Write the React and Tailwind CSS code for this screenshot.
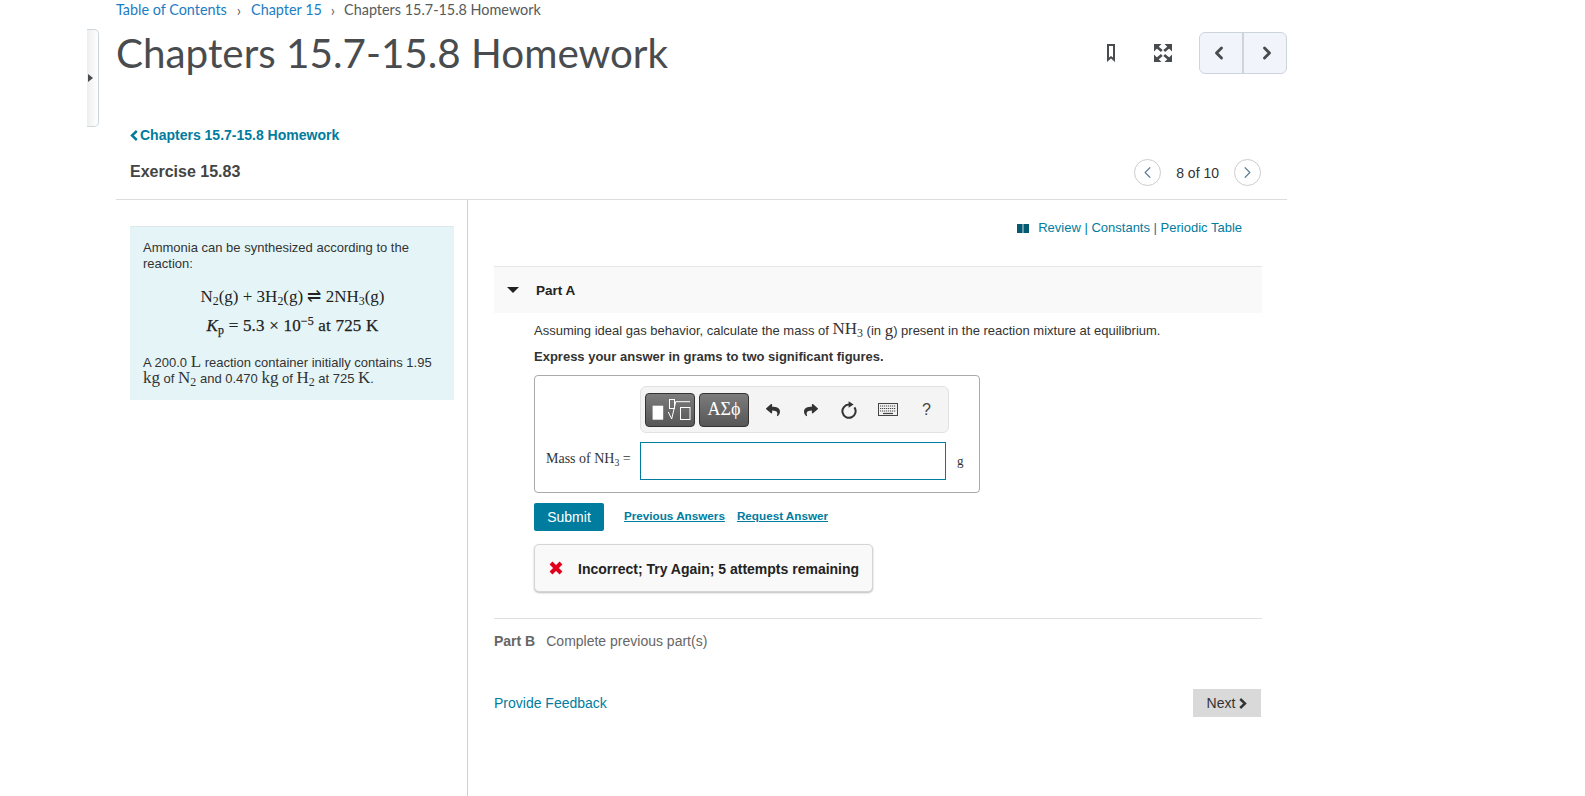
import { ChevronLeft, ChevronRight } from 'lucide-react';
import { FaReply, FaShare } from 'react-icons/fa';

const ARIAL = 'font-["Liberation_Sans",Arial,sans-serif]';
const SERIF = 'font-["Liberation_Serif",serif]';

const Sub = ({ children }) => (
  <span className="relative top-[3px] text-[0.7em] leading-none">{children}</span>
);

const Sup = ({ children }) => (
  <span className="relative -top-[6px] text-[0.7em] leading-none">{children}</span>
);

const M = ({ children }) => <span className={`${SERIF} text-[17px] leading-[0]`}>{children}</span>;

const Bookmark = () => (
  <svg width="8" height="18" viewBox="0 0 8 18" fill="#494c4e">
    <path d="M0 0h8v18l-4-3.4L0 18zM2 2v11.6l2-1.7 2 1.7V2z" fillRule="evenodd" />
  </svg>
);

const Expand = () => (
  <svg width="18" height="18" viewBox="0 0 18 18" fill="#494c4e" stroke="#494c4e">
    <path d="M0 0h7.5L0 7.5zM18 0h-7.5L18 7.5zM0 18h7.5L0 10.5zM18 18h-7.5l7.5-7.5z" strokeWidth="0" />
    <path d="M3 3l4.8 4M15 3l-4.8 4M3 15l4.8-4M15 15l-4.8-4" strokeWidth="2.8" fill="none" />
  </svg>
);

const Book = () => (
  <svg width="12" height="9" viewBox="0 0 12 9" fill="#045a71">
    <path d="M0 0h5.6v9H0zM6.4 0H12v9H6.4z" />
  </svg>
);

const BoldChevron = () => (
  <svg width="8" height="11" viewBox="0 0 8 11" fill="none" stroke="#007c9e" strokeWidth="2.4">
    <path d="M6.8 1L2 5.5l4.8 4.5" />
  </svg>
);

const KeyboardIcon = () => (
  <svg width="20" height="13" viewBox="0 0 20 13">
    <rect x="0.5" y="0.5" width="19" height="12" fill="#f2f2f2" stroke="#444" />
    <path d="M2 3h16M2 5.5h16M2 8h16" stroke="#444" strokeWidth="1.2" strokeDasharray="1.2 0.8" />
    <path d="M5 10.5h10" stroke="#444" strokeWidth="1.2" />
  </svg>
);

const Rotate = () => (
  <svg width="18" height="18" viewBox="0 0 18 18" fill="none">
    <path d="M9 3.6A6.6 6.6 0 1 0 14.4 6.4" stroke="#333" strokeWidth="2" />
    <path d="M8.6 0.2l5 3.3-5 3.3z" fill="#333" />
  </svg>
);

const TemplatesIcon = () => (
  <svg width="48" height="32" viewBox="0 0 48 32" fill="none">
    <rect x="6.6" y="11.7" width="10.6" height="14" fill="#fff" />
    <rect x="23.5" y="5.5" width="5" height="9" stroke="#fff" />
    <path d="M22.3 18l3.4 7 4-17.3H44" stroke="#fff" />
    <rect x="34.5" y="13.5" width="9.5" height="12" stroke="#fff" />
  </svg>
);

const DarkButton = ({ className = '', children }) => (
  <button className={`flex h-[34px] w-[50px] items-center justify-center rounded-[4px] border border-[#333] bg-gradient-to-b from-[#7c7c7c] to-[#575757] ${className}`}>
    {children}
  </button>
);

const CirclePager = ({ children }) => (
  <button className="flex h-[27px] w-[27px] items-center justify-center rounded-full border border-[#ccc] text-[#5f7f95]">
    {children}
  </button>
);

const App = () => {
  return (
    <div className={`relative h-[796px] overflow-hidden bg-white ${ARIAL}`}>
      {/* side panel handle */}
      <div className="absolute left-[87px] top-[29px] flex h-[98px] w-[12px] items-center rounded-r-[5px] border border-l-0 border-[#cdd5dc] bg-gradient-to-r from-[#eeeeee] to-white">
        <div className="ml-[1px] h-0 w-0 border-y-[4px] border-l-[5px] border-y-transparent border-l-[#494c4e]" />
      </div>

      <div className="ml-[116px] w-[1171px]">
        <nav className='flex h-[20px] items-center font-["Lato",sans-serif] text-[14.4px] text-[#565a5c]'>
          <a className="text-[#1c7cc4]">Table of Contents</a>
          <span className="mx-[10px] text-[15px]">›</span>
          <a className="text-[#1c7cc4]">Chapter 15</a>
          <span className="mx-[9px] text-[15px]">›</span>
          <span>Chapters 15.7-15.8 Homework</span>
        </nav>

        <header className="flex h-[67px] items-center">
          <h1 className='font-["Lato",sans-serif] text-[40.4px] leading-none text-[#494c4e]'>
            Chapters 15.7-15.8 Homework
          </h1>
          <div className="ml-auto mb-[2px] flex items-center">
            <Bookmark />
            <span className="ml-[39px]">
              <Expand />
            </span>
            <div className="ml-[27px] flex h-[42px] w-[88px] rounded-[6px] border border-[#cdd5dc] bg-[#f1f5fb] text-[#494c4e]">
              <button className="flex w-[44px] items-center justify-center border-r-2 border-[#cdd5dc] pr-[5px]">
                <ChevronLeft size={20} strokeWidth={3.5} />
              </button>
              <button className="flex flex-1 items-center justify-center pl-[3px]">
                <ChevronRight size={20} strokeWidth={3.5} />
              </button>
            </div>
          </div>
        </header>

        <div className="mt-[38px] pl-[14px]">
          <a className="flex h-[20px] items-center gap-[2px] text-[14px] font-bold text-[#007c9e]">
            <BoldChevron />
            Chapters 15.7-15.8 Homework
          </a>
        </div>

        <div className="mt-[10px] flex h-[33px] items-center pl-[14px] pr-[26px]">
          <h2 className="text-[16px] font-bold text-[#444]">Exercise 15.83</h2>
          <div className="ml-auto mt-[1px] flex items-center text-[14px] text-[#333]">
            <CirclePager>
              <ChevronLeft size={19} strokeWidth={1.5} />
            </CirclePager>
            <span className="mx-[15px] mt-[2px]">8 of 10</span>
            <CirclePager>
              <ChevronRight size={19} strokeWidth={1.5} />
            </CirclePager>
          </div>
        </div>

        <div className="mt-[11px] flex h-[597px] border-t border-[#dddddd]">
          {/* left column */}
          <aside className="w-[352px] shrink-0 border-r border-[#c7d3e0] pl-[14px] pt-[26px]">
            <div className="h-[174px] w-[324px] border-t border-[#dde8ea] bg-[#e5f5f7] px-[13px] pt-[13px] text-[13px] leading-[16px] text-[#333]">
              <p>
                Ammonia can be synthesized according to the
                <br />
                reaction:
              </p>
              <div className={`${SERIF} mt-[11px] text-center text-[17px] leading-[28px] text-[#222]`}>
                <div className="pl-[1px]">
                  N<Sub>2</Sub>(g) + 3H<Sub>2</Sub>(g) ⇌ 2NH<Sub>3</Sub>(g)
                </div>
                <div className="mt-[1px] pl-[1px] tracking-[0.2px] [-webkit-text-stroke:0.25px]">
                  <i>K</i>
                  <Sub>p</Sub> = 5.3 × 10<Sup>−5</Sup> at 725 K
                </div>
              </div>
              <p className="mt-[15px] leading-[16px]">
                A 200.0 <M>L</M> reaction container initially contains 1.95
                <br />
                <M>kg</M> of <M>N<Sub>2</Sub></M> and 0.470 <M>kg</M> of <M>H<Sub>2</Sub></M> at 725 <M>K</M>.
              </p>
            </div>
          </aside>

          {/* right column */}
          <main className="flex-1 pl-[26px] pr-[25px]">
            <div className="mt-[20px] flex h-[16px] items-center justify-end pr-[20px] text-[13px] text-[#007c9e]">
              <Book />
              <span className="ml-[9px]">Review | Constants | Periodic Table</span>
            </div>

            <section className="mt-[30px] flex h-[47px] items-center border-t border-[#e5e5e5] bg-[#f9f9f9]">
              <div className="ml-[13px] h-0 w-0 border-x-[6px] border-t-[6px] border-x-transparent border-t-[#222]" />
              <h3 className="ml-[17px] pt-[2px] text-[13.5px] font-bold text-[#222]">Part A</h3>
            </section>

            <div className="pl-[40px]">
              <p className="mt-[8px] flex h-[20px] items-center whitespace-pre text-[13px] text-[#333]">
                Assuming ideal gas behavior, calculate the mass of <M>NH<Sub>3</Sub></M> (in <M>g</M>) present in the reaction mixture at equilibrium.
              </p>
              <p className="mt-[6px] h-[20px] text-[13px] font-bold leading-[20px] text-[#333]">
                Express your answer in grams to two significant figures.
              </p>

              <div className="mt-[8px] h-[118px] w-[446px] rounded-[4px] border border-[#aaaaaa] pl-[11px] pt-[10px]">
                <div className="ml-[94px] flex h-[47px] w-[309px] items-center rounded-[6px] border border-[#e2e2e2] bg-[#f4f4f4] pl-[4px]">
                  <DarkButton>
                    <TemplatesIcon />
                  </DarkButton>
                  <DarkButton className={`ml-[4px] ${SERIF} text-[18px] text-white`}>ΑΣϕ</DarkButton>
                  <FaReply size={14} className="ml-[17px] text-[#333]" />
                  <FaShare size={14} className="ml-[24px] text-[#333]" />
                  <span className="ml-[22px]">
                    <Rotate />
                  </span>
                  <span className="ml-[20px]">
                    <KeyboardIcon />
                  </span>
                  <span className="ml-[24px] text-[16px] text-[#444]">?</span>
                </div>
                <div className="mt-[9px] flex items-center">
                  <label className={`mb-[6px] w-[94px] shrink-0 ${SERIF} whitespace-nowrap text-[14px] text-[#333]`}>
                    Mass of NH<Sub>3</Sub> =
                  </label>
                  <input className="h-[38px] w-[306px] border border-[#007c9e] bg-white outline-none" />
                  <span className={`ml-[11px] ${SERIF} text-[13px] text-[#333]`}>g</span>
                </div>
              </div>

              <div className="mt-[10px] flex items-start">
                <button className="h-[28px] w-[70px] rounded-[2px] bg-[#007c9e] text-[14px] text-white">
                  Submit
                </button>
                <a className="ml-[20px] mt-[4px] text-[11.7px] font-bold text-[#007c9e] underline">Previous Answers</a>
                <a className="ml-[12px] mt-[4px] text-[11.7px] font-bold text-[#007c9e] underline">Request Answer</a>
              </div>

              <div className="mt-[13px] flex h-[48px] w-[339px] items-center rounded-[5px] border border-[#d5d5d5] bg-[#f9f9f9] pl-[14px] shadow-[0_1px_2px_#bbbbbb]">
                <svg width="14" height="14" viewBox="0 0 14 14">
                  <path d="M2 2l10 10M12 2L2 12" stroke="#e2001a" strokeWidth="4" />
                </svg>
                <span className="ml-[15px] pt-[2px] text-[14px] font-bold text-[#222]">
                  Incorrect; Try Again; 5 attempts remaining
                </span>
              </div>
            </div>

            <div className="mt-[26px] flex h-[46px] items-center border-t border-[#e0e0e0] text-[14px]">
              <span className="font-bold text-[#666]">Part B</span>
              <span className="ml-[11px] text-[#666]">Complete previous part(s)</span>
            </div>

            <div className="mt-[25px] flex h-[28px] items-center justify-between">
              <a className="text-[14px] text-[#007c9e]">Provide Feedback</a>
              <button className="mr-[1px] flex h-[28px] w-[68px] items-center justify-center gap-[4px] bg-[#d9d9d9] text-[14px] text-[#333]">
                Next
                <svg width="8" height="11" viewBox="0 0 8 11" fill="none" stroke="#333" strokeWidth="2.4">
                  <path d="M1.2 1L6 5.5 1.2 10" />
                </svg>
              </button>
            </div>
          </main>
        </div>
      </div>
    </div>
  );
};

export default App;
